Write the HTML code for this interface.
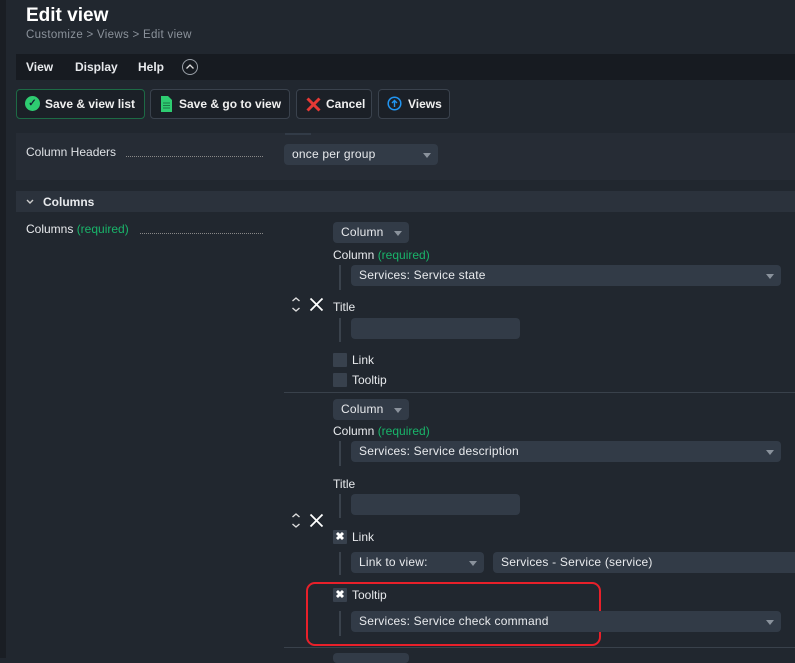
<!DOCTYPE html>
<html><head><style>
*{margin:0;padding:0;box-sizing:border-box}
body{width:795px;height:658px;overflow:hidden;background:#21272f;font-family:"Liberation Sans",sans-serif;color:#e8eaed;position:relative;font-size:12px}
.a{position:absolute}
.sel{position:absolute;background:#323b47;border-radius:4px;color:#e8eaed;font-size:12px;padding-left:8px;line-height:21px;height:21px;letter-spacing:0.2px}
.sel:after{content:"";position:absolute;right:7px;top:9px;border-left:4px solid transparent;border-right:4px solid transparent;border-top:5px solid #8a929c}
.btn{position:absolute;top:89px;height:30px;border:1px solid #3a424d;border-radius:4px;background:#1b2027;font-weight:bold;font-size:12px;line-height:28px;color:#f0f0f0}
.vl{position:absolute;width:2px;background:#3a424c}
.cb{position:absolute;width:14px;height:14px;background:#38414d;border-radius:1px;color:#fff;font-size:11px;line-height:14px;text-align:center;font-weight:bold}
.g{color:#19b46a}
.dots{position:absolute;height:1px;border-top:1px dotted #888}
</style></head><body>
<div class="a" style="left:0;top:0;width:6px;height:658px;background:#1a1e24"></div>
<div class="a" style="left:26px;top:5px;font-size:19px;font-weight:bold;color:#fff">Edit view</div>
<div class="a" style="left:26px;top:29px;font-size:11.5px;color:#8b929b;letter-spacing:0.3px">Customize &gt; Views &gt; Edit view</div>
<div class="a" style="left:16px;top:54px;width:779px;height:26px;background:#171b21"></div>
<div class="a" style="left:26px;top:60px;font-weight:bold">View</div>
<div class="a" style="left:75px;top:60px;font-weight:bold">Display</div>
<div class="a" style="left:138px;top:60px;font-weight:bold">Help</div>
<svg class="a" style="left:181px;top:58px" width="18" height="18"><circle cx="9" cy="9" r="7.5" fill="none" stroke="#9aa0a8" stroke-width="1"/><path d="M5.5 10.5 L9 7 L12.5 10.5" fill="none" stroke="#ddd" stroke-width="1.3"/></svg>

<div class="btn" style="left:16px;width:129px;border-color:#1d6a45"><span class="a" style="left:8px;top:6px;width:15px;height:15px;border-radius:50%;background:#2ecc71;color:#123;font-size:10px;line-height:15px;text-align:center">✓</span><span style="padding-left:28px">Save &amp; view list</span></div>
<div class="btn" style="left:150px;width:140px"><svg class="a" style="left:10px;top:6px" width="11" height="16"><path d="M0 0H7L11 4V16H0Z" fill="#2ecc71"/><path d="M2 7H9M2 9.5H9M2 12H9" stroke="#1b7a45" stroke-width="1"/></svg><span style="padding-left:28px">Save &amp; go to view</span></div>
<div class="btn" style="left:296px;width:76px"><svg class="a" style="left:9px;top:7px" width="15" height="15"><path d="M1.5 1.5L13.5 13.5M13.5 1.5L1.5 13.5" stroke="#e53935" stroke-width="3"/></svg><span style="padding-left:29px">Cancel</span></div>
<div class="btn" style="left:378px;width:72px"><svg class="a" style="left:8px;top:6px" width="15" height="15"><circle cx="7.5" cy="7.5" r="6.3" fill="none" stroke="#2196f3" stroke-width="1.5"/><path d="M7.5 11V4.5M5 7L7.5 4.5L10 7" fill="none" stroke="#2196f3" stroke-width="1.4"/></svg><span style="padding-left:29px">Views</span></div>

<div class="a" style="left:16px;top:133px;width:779px;height:47px;background:#262c35"></div>
<div class="a" style="left:285px;top:133px;width:26px;height:2px;background:#323b47"></div>
<div class="a" style="left:26px;top:145px;color:#dfe2e6">Column Headers</div>
<div class="dots" style="left:126px;top:156px;width:137px"></div>
<div class="sel" style="left:284px;top:144px;width:154px">once per group</div>

<div class="a" style="left:16px;top:191px;width:779px;height:21px;background:#2b323c"></div>
<svg class="a" style="left:25px;top:198px" width="10" height="8"><path d="M2 2L5 5L8 2" fill="none" stroke="#ccc" stroke-width="1.4"/></svg>
<div class="a" style="left:43px;top:195px;font-weight:bold">Columns</div>
<div class="a" style="left:26px;top:222px">Columns <span class="g">(required)</span></div>
<div class="dots" style="left:140px;top:233px;width:123px"></div>

<div class="sel" style="left:333px;top:222px;width:76px">Column</div>
<div class="a" style="left:333px;top:248px">Column <span class="g">(required)</span></div>
<div class="vl" style="left:339px;top:265px;height:25px"></div>
<div class="sel" style="left:351px;top:265px;width:430px">Services: Service state</div>
<svg class="a" style="left:290px;top:296px" width="12" height="18"><path d="M2.5 5L6 2L9.5 5M2.5 12L6 15L9.5 12" fill="none" stroke="#ddd" stroke-width="1.4"/></svg>
<svg class="a" style="left:309px;top:297px" width="15" height="15"><path d="M1.5 1.5L13.5 13.5M13.5 1.5L1.5 13.5" stroke="#fff" stroke-width="1.8"/></svg>
<div class="a" style="left:333px;top:300px">Title</div>
<div class="vl" style="left:339px;top:318px;height:24px"></div>
<div class="a" style="left:351px;top:318px;width:169px;height:21px;background:#323b47;border-radius:4px"></div>
<div class="cb" style="left:333px;top:353px"></div><div class="a" style="left:352px;top:353px">Link</div>
<div class="cb" style="left:333px;top:373px"></div><div class="a" style="left:352px;top:373px">Tooltip</div>
<div class="a" style="left:284px;top:392px;width:511px;height:1px;background:#39414b"></div>

<div class="sel" style="left:333px;top:399px;width:76px">Column</div>
<div class="a" style="left:333px;top:424px">Column <span class="g">(required)</span></div>
<div class="vl" style="left:339px;top:441px;height:25px"></div>
<div class="sel" style="left:351px;top:441px;width:430px">Services: Service description</div>
<div class="a" style="left:333px;top:477px">Title</div>
<div class="vl" style="left:339px;top:494px;height:24px"></div>
<div class="a" style="left:351px;top:494px;width:169px;height:21px;background:#323b47;border-radius:4px"></div>
<svg class="a" style="left:290px;top:512px" width="12" height="18"><path d="M2.5 5L6 2L9.5 5M2.5 12L6 15L9.5 12" fill="none" stroke="#ddd" stroke-width="1.4"/></svg>
<svg class="a" style="left:309px;top:513px" width="15" height="15"><path d="M1.5 1.5L13.5 13.5M13.5 1.5L1.5 13.5" stroke="#fff" stroke-width="1.8"/></svg>
<div class="cb" style="left:333px;top:530px">✖</div><div class="a" style="left:352px;top:530px">Link</div>
<div class="vl" style="left:339px;top:552px;height:23px"></div>
<div class="sel" style="left:351px;top:552px;width:133px">Link to view:</div>
<div class="a" style="left:493px;top:552px;width:310px;height:21px;background:#323b47;border-radius:4px;padding-left:8px;line-height:21px;letter-spacing:0.2px">Services - Service (service)</div>
<div class="a" style="left:306px;top:582px;width:295px;height:64px;border:2.5px solid #e8202a;border-radius:9px"></div>
<div class="cb" style="left:333px;top:588px">✖</div><div class="a" style="left:352px;top:588px">Tooltip</div>
<div class="vl" style="left:339px;top:611px;height:25px"></div>
<div class="sel" style="left:351px;top:611px;width:430px">Services: Service check command</div>
<div class="a" style="left:284px;top:647px;width:511px;height:1px;background:#39414b"></div>
<div class="a" style="left:333px;top:653px;width:76px;height:10px;background:#323b47;border-radius:4px"></div>
</body></html>
